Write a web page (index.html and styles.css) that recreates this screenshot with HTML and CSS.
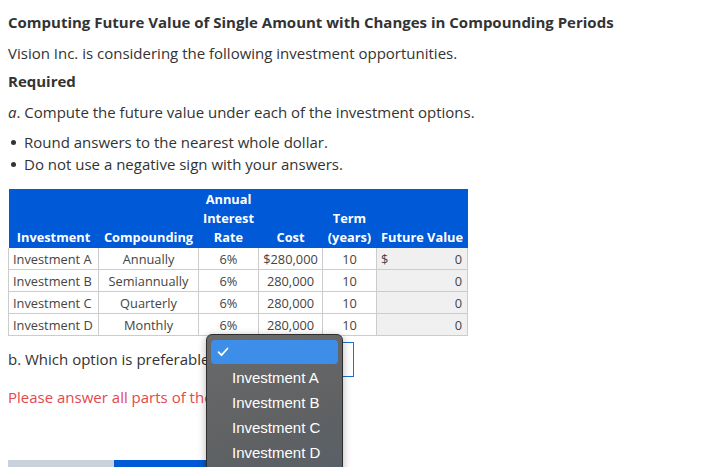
FILE: index.html
```html
<!DOCTYPE html>
<html>
<head>
<meta charset="utf-8">
<link rel="stylesheet" href="styles.css">
</head>
<body>
<div class="page">
  <h1 class="title">Computing Future Value of Single Amount with Changes in Compounding Periods</h1>
  <p class="para">Vision Inc. is considering the following investment opportunities.</p>
  <p class="req">Required</p>
  <p class="para"><em>a</em>. Compute the future value under each of the investment options.</p>
  <ul class="bullets">
    <li>Round answers to the nearest whole dollar.</li>
    <li>Do not use a negative sign with your answers.</li>
  </ul>
  <table class="tbl">
    <colgroup>
      <col class="w1"><col class="w2"><col class="w3"><col class="w4"><col class="w5"><col class="w6">
    </colgroup>
    <thead>
      <tr>
        <th>Investment</th>
        <th>Compounding</th>
        <th>Annual<br>Interest<br>Rate</th>
        <th>Cost</th>
        <th>Term<br>(years)</th>
        <th>Future Value</th>
      </tr>
    </thead>
    <tbody>
      <tr><td class="l">Investment A</td><td>Annually</td><td>6%</td><td>$280,000</td><td>10</td><td class="fv"><span class="dol">$</span><span>0</span></td></tr>
      <tr><td class="l">Investment B</td><td>Semiannually</td><td>6%</td><td>280,000</td><td>10</td><td class="fv"><span>0</span></td></tr>
      <tr><td class="l">Investment C</td><td>Quarterly</td><td>6%</td><td>280,000</td><td>10</td><td class="fv"><span>0</span></td></tr>
      <tr><td class="l">Investment D</td><td>Monthly</td><td>6%</td><td>280,000</td><td>10</td><td class="fv"><span>0</span></td></tr>
    </tbody>
  </table>
  <div class="qb">
    <span class="qtext">b. Which option is preferable?</span>
    <span class="selbox"></span>
    <div class="menu">
      <div class="mi sel"><svg class="chk" width="12" height="10" viewBox="0 0 12 10"><path d="M1.5 5.2 L4.5 8.2 L10.5 1.5" fill="none" stroke="#fff" stroke-width="1.8" stroke-linecap="round" stroke-linejoin="round"/></svg></div>
      <div class="mi">Investment A</div>
      <div class="mi">Investment B</div>
      <div class="mi">Investment C</div>
      <div class="mi">Investment D</div>
    </div>
  </div>
  <p class="warn">Please answer all parts of the question.</p>
  <div class="bar"><span class="bar-g"></span><span class="bar-b"></span></div>
</div>
</body>
</html>
```
FILE: styles.css
```css
html, body { margin: 0; padding: 0; background: #fff; }
body { font-family: "Open Sans", "Liberation Sans", sans-serif; color: #333; width: 701px; height: 467px; overflow: hidden; }
.page { padding: 12px 8px 0 8px; position: relative; height: 455px; }
.title { font-size: 15px; font-weight: 700; margin: 0; line-height: 20px; color: #333; white-space: nowrap; }
.para { font-size: 15px; margin: 11px 0 0 0; line-height: 20px; }
.req { font-size: 15px; font-weight: 700; margin: 8px 0 0 0; line-height: 20px; }
.bullets { margin: 9px 0 0 0; padding: 0 0 0 16px; font-size: 15px; line-height: 22px; list-style: none; }
.bullets li { position: relative; }
.bullets li::before { content: ""; position: absolute; left: -13px; top: 9px; width: 5px; height: 5px; border-radius: 50%; background: #333; }
.tbl { margin-top: 14px; border-collapse: collapse; font-size: 12.8px; width: 459px; table-layout: fixed; }
.w1 { width: 90px; } .w2 { width: 100px; } .w3 { width: 60px; } .w4 { width: 64px; } .w5 { width: 54px; } .w6 { width: 91px; }
.tbl th { background: #0059d6; color: #fff; font-weight: 700; line-height: 19px; vertical-align: bottom; padding: 1px 0 1px 0; text-align: center; white-space: nowrap; }
.tbl td { border: 1px solid #ccc; height: 21px; padding: 0 4px; line-height: 20px; text-align: center; color: #444; white-space: nowrap; }
.tbl td.l { text-align: left; padding-left: 4px; }
.tbl tbody tr:first-child td { border-top: none; }
.tbl td.fv { background: #f0f0f0; text-align: right; position: relative; padding-right: 5px; }
.dol { position: absolute; left: 4px; }
.qb { margin-top: 5px; display: flex; align-items: center; font-size: 15px; height: 36px; width: 346px; position: relative; }
.qtext { white-space: nowrap; }
.selbox { flex: 1; height: 33px; border: 1px solid #1a6fd8; margin-left: 6px; }
.menu { position: absolute; left: 198px; top: -7px; width: 135px; height: 150px; border: 1px solid #2d2d2d; border-radius: 6px; background: linear-gradient(160deg, #6a6a6a 0%, #5f6163 60%, #566069 100%); box-shadow: 0 2px 8px rgba(0,0,0,0.3); padding-top: 5px; z-index: 5; }
.mi { font-family: "Liberation Sans", Arial, sans-serif; font-size: 15px; color: #fff; height: 25px; line-height: 25px; padding-left: 21px; margin: 0 4px; }
.mi.sel { background: #3d8ee9; border-radius: 4px; height: 24px; margin-bottom: 1px; position: relative; }
.chk { position: absolute; left: 6px; top: 7px; }
.warn { color: #e5484d; font-size: 15px; margin: 10px 0 0 0; line-height: 20px; white-space: nowrap; }
.bar { position: absolute; left: 8px; top: 460px; height: 8px; display: flex; }
.bar-g { width: 106px; background: #c9d1da; }
.bar-b { width: 160px; background: #0059d6; }
```
